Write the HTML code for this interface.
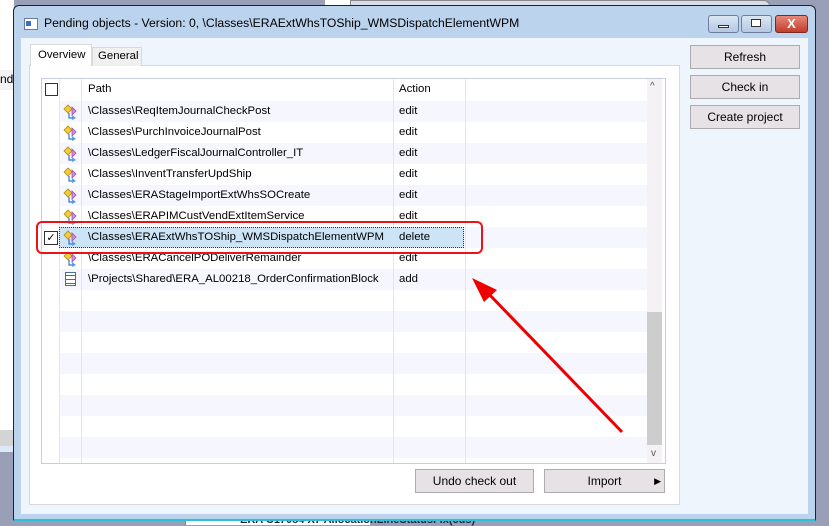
<!DOCTYPE html>
<html><head><meta charset="utf-8"><style>
*{margin:0;padding:0;box-sizing:border-box}
body{width:829px;height:525px;overflow:hidden;position:relative;background:#9a9fb8;font-family:"Liberation Sans",sans-serif;font-size:11.4px;color:#000}
.a{position:absolute}
.btn{position:absolute;background:#e6e2e6;border:1px solid #acacac;text-align:center;font-size:12px;line-height:22px}
.row{position:absolute;left:59px;width:588px;height:21px}
.row span{position:absolute;top:4px;font-size:11.4px}
.ico{position:absolute;left:4px;top:3px;width:16px;height:16px}
</style></head><body>
<div class="a" style="left:0;top:0;width:14px;height:430px;background:#fff"></div>
<div class="a" style="left:0;top:70px;width:14px;height:20px;background:#f3f1f1"></div>
<div class="a" style="left:0;top:72px;font-size:12px">nd</div>
<div class="a" style="left:0;top:430px;width:14px;height:16px;background:#d4d4d4"></div>
<div class="a" style="left:0;top:446px;width:14px;height:6px;background:#dbe8f6"></div>
<div class="a" style="left:325px;top:0;width:25px;height:6px;background:#fff"></div>
<div class="a" style="left:350px;top:0;width:420px;height:6px;background:#d8dde8;border:1px solid #888;border-radius:0 8px 0 0"></div>
<div class="a" style="left:185px;top:518px;width:185px;height:7px;background:#fff;border-left:1px solid #888"></div>
<div class="a" style="left:240px;top:514px;font-size:11px;font-weight:bold;color:#223">ERA C17084 X7 AllocationLineStatusFix(cus)</div>
<div class="a" style="left:13px;top:5px;width:803px;height:516px;background:#bcd3ee;border:1px solid #222;border-bottom:2px solid #2ac0d8;border-radius:6px 6px 0 0"></div>
<div class="a" style="left:21px;top:38px;width:787px;height:476px;background:#eef5fd"></div>
<div class="a" style="left:24px;top:18px;width:14px;height:12px;background:#fff;border:1px solid #6b7c99"></div>
<div class="a" style="left:26px;top:21px;width:5px;height:5px;background:#3a6fc4"></div>
<div class="a" style="left:44px;top:16px;font-size:12.2px;color:#000">Pending objects - Version: 0, \Classes\ERAExtWhsTOShip_WMSDispatchElementWPM</div>
<div class="a" style="left:708px;top:15px;width:31px;height:18px;background:linear-gradient(#dbe6f3,#b4c8e2);border:1px solid #6d7f9d;border-radius:3px"></div>
<div class="a" style="left:718px;top:25px;width:11px;height:3px;border:1px solid #333;background:#fff"></div>
<div class="a" style="left:741px;top:15px;width:31px;height:18px;background:linear-gradient(#dbe6f3,#b4c8e2);border:1px solid #6d7f9d;border-radius:3px"></div>
<div class="a" style="left:751px;top:19px;width:10px;height:8px;border:1px solid #333;background:#fff"></div>
<div class="a" style="left:775px;top:15px;width:33px;height:18px;background:linear-gradient(#e6897a,#c23d2a);border:1px solid #7a2a22;border-radius:3px;color:#fff;font-weight:bold;text-align:center;line-height:16px;font-size:13px">X</div>
<div class="a" style="left:29px;top:65px;width:651px;height:440px;background:#fff;border:1px solid #d9d9d9"></div>
<div class="a" style="left:30px;top:44px;width:62px;height:22px;background:#fff;border:1px solid #d9d9d9;border-bottom:none"></div>
<div class="a" style="left:38px;top:49px">Overview</div>
<div class="a" style="left:92px;top:47px;width:50px;height:19px;background:#f0f0f0;border:1px solid #d9d9d9;border-bottom:none"></div>
<div class="a" style="left:98px;top:50px">General</div>
<div class="a" style="left:41px;top:78px;width:625px;height:386px;border:1px solid #c6cfe0;background:#fff"></div>
<div class="a" style="left:59px;top:101px;width:588px;height:362px;background:repeating-linear-gradient(#f6f6fe 0 21px,#fff 21px 42px)"></div>
<div class="a" style="left:59px;top:79px;width:1px;height:384px;background:#dde8f4"></div>
<div class="a" style="left:81px;top:79px;width:1px;height:384px;background:#dde8f4"></div>
<div class="a" style="left:393px;top:79px;width:1px;height:384px;background:#dde8f4"></div>
<div class="a" style="left:465px;top:79px;width:1px;height:384px;background:#dde8f4"></div>
<div class="a" style="left:45px;top:83px;width:13px;height:13px;border:1px solid #333;background:#fff"></div>
<div class="a" style="left:88px;top:83px">Path</div>
<div class="a" style="left:399px;top:83px">Action</div>
<div class="a" style="left:647px;top:79px;width:15px;height:384px;background:#f5f2f5"></div>
<div class="a" style="left:647px;top:312px;width:15px;height:133px;background:#cdcdcd"></div>
<div class="a" style="left:650px;top:81px;font-size:10px;color:#555">^</div>
<div class="a" style="left:651px;top:448px;font-size:10px;color:#555">v</div>
<svg class="a" style="left:0;top:0" width="0" height="0">
<defs><g id="ci"><path d="M1 5 L5 1 L9 5 L5 9Z" fill="#f2cc3a" stroke="#b08a10" stroke-width=".8"/><path d="M9 3 L13 7 L9 11Z" fill="#d58ce0" stroke="#a050b0" stroke-width=".8"/><path d="M6 9 L6 14 L9 14" fill="none" stroke="#3574d4" stroke-width="1.2"/><path d="M9 11 L13 14 L9 16Z" fill="#5a9be8"/></g></defs>
</svg>
<div class="row" style="top:101px"><svg class="ico"><use href="#ci"/></svg><span style="left:29px">\Classes\ReqItemJournalCheckPost</span><span style="left:340px">edit</span></div>
<div class="row" style="top:122px"><svg class="ico"><use href="#ci"/></svg><span style="left:29px">\Classes\PurchInvoiceJournalPost</span><span style="left:340px">edit</span></div>
<div class="row" style="top:143px"><svg class="ico"><use href="#ci"/></svg><span style="left:29px">\Classes\LedgerFiscalJournalController_IT</span><span style="left:340px">edit</span></div>
<div class="row" style="top:164px"><svg class="ico"><use href="#ci"/></svg><span style="left:29px">\Classes\InventTransferUpdShip</span><span style="left:340px">edit</span></div>
<div class="row" style="top:185px"><svg class="ico"><use href="#ci"/></svg><span style="left:29px">\Classes\ERAStageImportExtWhsSOCreate</span><span style="left:340px">edit</span></div>
<div class="row" style="top:206px"><svg class="ico"><use href="#ci"/></svg><span style="left:29px">\Classes\ERAPIMCustVendExtItemService</span><span style="left:340px">edit</span></div>
<div class="a" style="left:59px;top:227px;width:405px;height:21px;background:#cde4f7;border:1px dotted #333"></div>
<div class="a" style="left:44px;top:231px;width:14px;height:14px;border:1px solid #333;background:#fff;font-size:11px;line-height:12px;text-align:center">✓</div>
<div class="row" style="top:227px"><svg class="ico"><use href="#ci"/></svg><span style="left:29px">\Classes\ERAExtWhsTOShip_WMSDispatchElementWPM</span><span style="left:340px">delete</span></div>
<div class="row" style="top:248px"><svg class="ico"><use href="#ci"/></svg><span style="left:29px">\Classes\ERACancelPODeliverRemainder</span><span style="left:340px">edit</span></div>
<div class="row" style="top:269px"><div class="a" style="left:6px;top:3px;width:11px;height:14px;border:1px solid #4a6d9c;background:#fff;background-image:repeating-linear-gradient(#fff 0 2px,#d33 2px 3px,#fff 3px 4px)"></div><span style="left:29px">\Projects\Shared\ERA_AL00218_OrderConfirmationBlock</span><span style="left:340px">add</span></div>
<div class="btn" style="left:690px;top:45px;width:110px;height:24px">Refresh</div>
<div class="btn" style="left:690px;top:75px;width:110px;height:24px">Check in</div>
<div class="btn" style="left:690px;top:105px;width:110px;height:24px">Create project</div>
<div class="btn" style="left:415px;top:469px;width:119px;height:24px">Undo check out</div>
<div class="btn" style="left:544px;top:469px;width:121px;height:24px">Import<span style="position:absolute;right:3px;top:0;font-size:9px">▶</span></div>
<svg class="a" style="left:0;top:0" width="829" height="525">
<rect x="37" y="222" width="445" height="31" rx="5" fill="none" stroke="#e8141a" stroke-width="2"/>
<line x1="622" y1="432" x2="485" y2="290" stroke="#ee0000" stroke-width="3"/>
<path d="M472 278 L497 290 L484 302Z" fill="#ee0000"/>
</svg>
</body></html>
